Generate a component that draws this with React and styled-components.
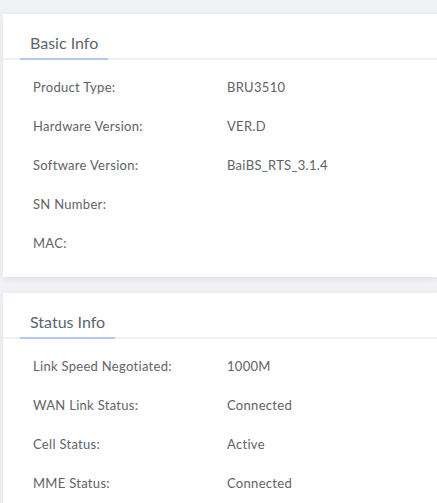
import React from 'react'
import styled, { createGlobalStyle } from 'styled-components';

const GlobalStyle = createGlobalStyle`
    html, body {
        margin: 0;
        padding: 0;
        background: #f0f2f5;
        overflow: hidden;
    }
    body {
        font-family: "Lato", "Liberation Sans", sans-serif;
    }
`;

const basicInfo = [
    { label: 'Product Type:', value: 'BRU3510' },
    { label: 'Hardware Version:', value: 'VER.D' },
    { label: 'Software Version:', value: 'BaiBS_RTS_3.1.4' },
    { label: 'SN Number:', value: '' },
    { label: 'MAC:', value: '' },
];

const statusInfo = [
    { label: 'Link Speed Negotiated:', value: '1000M' },
    { label: 'WAN Link Status:', value: 'Connected' },
    { label: 'Cell Status:', value: 'Active' },
    { label: 'MME Status:', value: 'Connected' },
];

const InfoCard = ({ title, rows }) => (
    <Card>
        <Header>
            <Tab>{title}</Tab>
        </Header>
        <List>
            {rows.map(row => (
                <Row key={row.label}>
                    <Label>{row.label}</Label>
                    <Value>{row.value}</Value>
                </Row>
            ))}
        </List>
    </Card>
);

export default function App() {
    return (
        <Page>
            <GlobalStyle />
            <InfoCard title="Basic Info" rows={basicInfo} />
            <InfoCard title="Status Info" rows={statusInfo} />
        </Page>
    )
}

const Page = styled.div`
    display: flex;
    flex-direction: column;
    gap: 16px;
    padding: 14px 0 0 3px;
    width: 434px;
`;

const Card = styled.div`
    background: #fff;
    box-shadow: 0 2px 8px rgba(0, 0, 0, 0.08);
    padding-bottom: 15px;
`;

const Header = styled.div`
    display: flex;
    padding: 0 0 0 17px;
    border-bottom: 2px solid #f0f0f0;
    height: 44px;
    align-items: flex-end;
`;

const Tab = styled.div`
    padding: 0 10px 5px 10px;
    margin-bottom: -2px;
    border-bottom: 2px solid #b4c8f4;
    font-size: 16px;
    color: #5d6470;
    line-height: 20px;
`;

const List = styled.div`
    display: flex;
    flex-direction: column;
    padding: 7px 0 0 30px;
`;

const Row = styled.div`
    display: grid;
    grid-template-columns: 194px 1fr;
    height: 39px;
    align-items: center;
    font-size: 13px;
    color: #5f6266;
    letter-spacing: 0.3px;
`;

const Label = styled.span``;

const Value = styled.span``;
